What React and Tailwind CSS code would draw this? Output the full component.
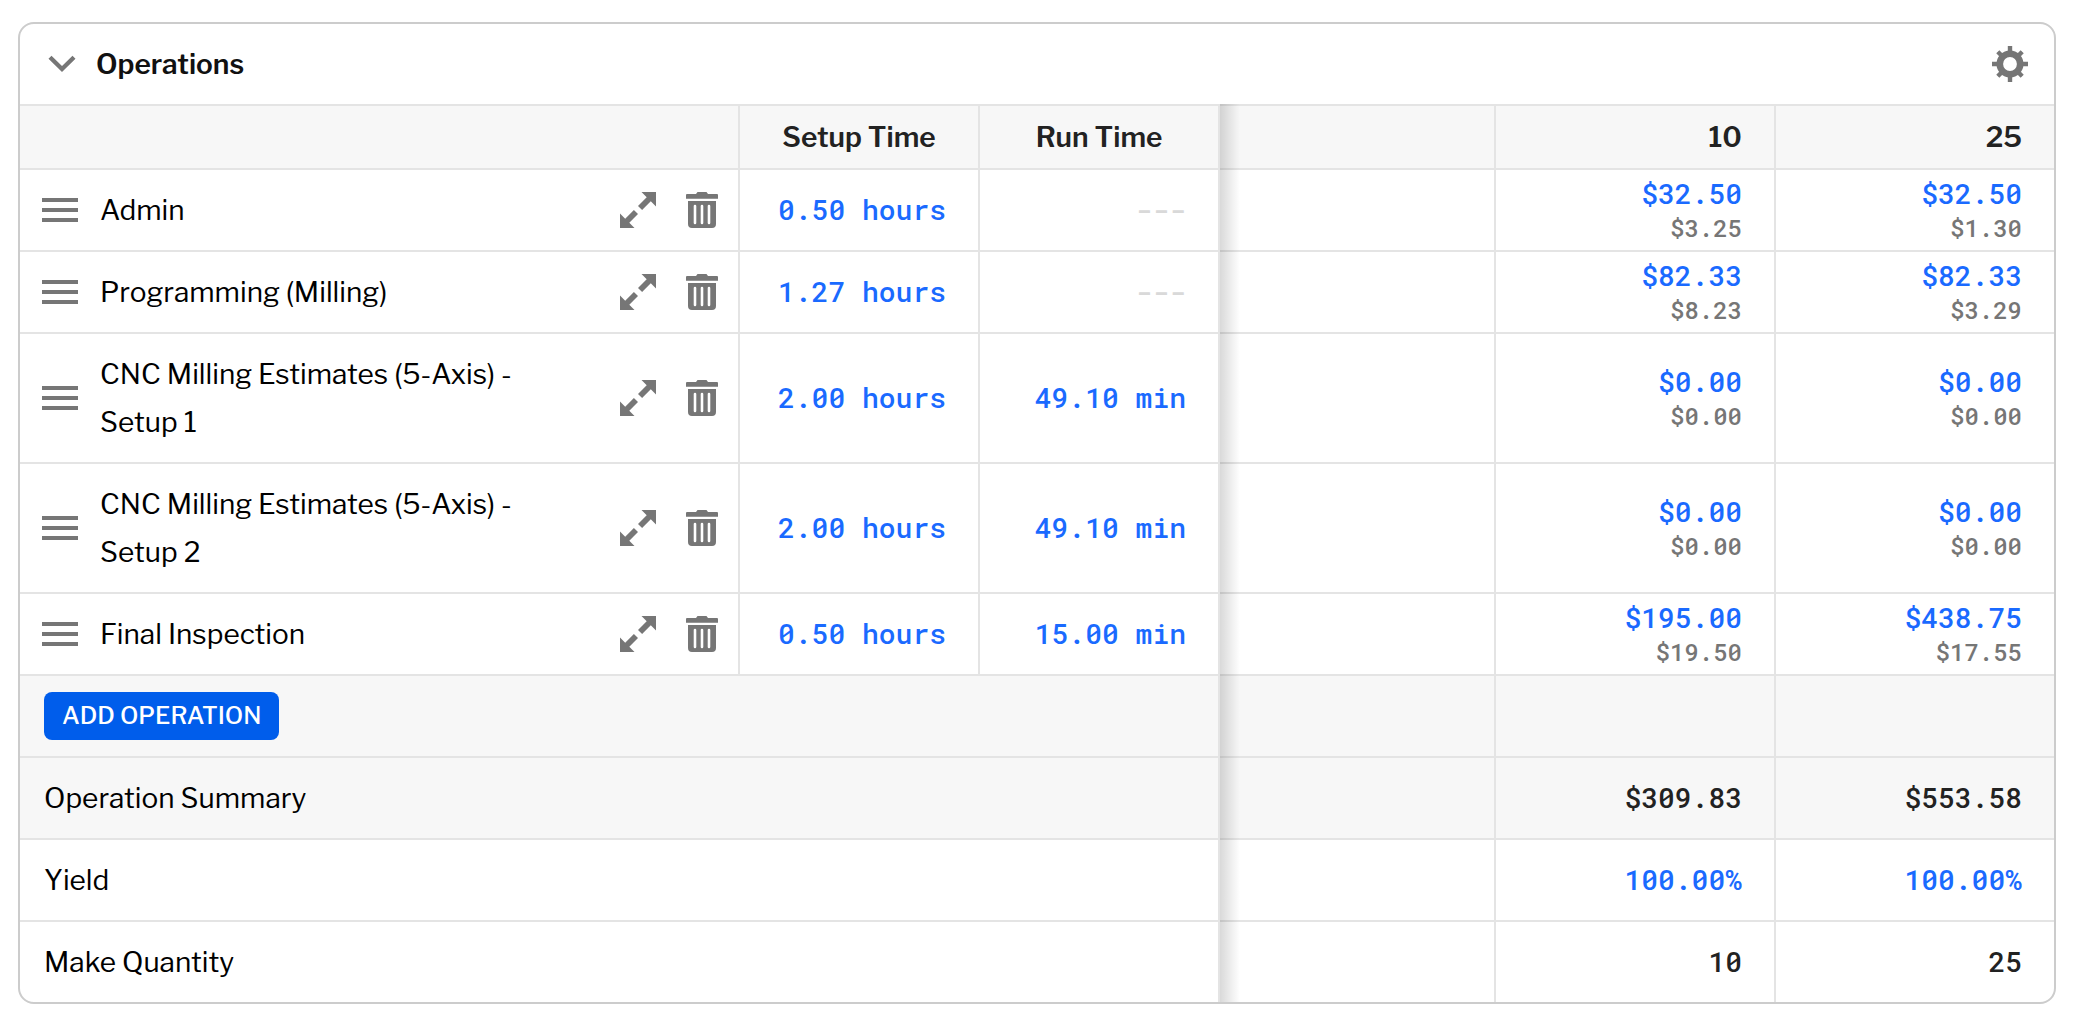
const operations = [
  { name: "Admin", setup: "0.50 hours", run: null, prices: [["$32.50", "$3.25"], ["$32.50", "$1.30"]] },
  { name: "Programming (Milling)", setup: "1.27 hours", run: null, prices: [["$82.33", "$8.23"], ["$82.33", "$3.29"]] },
  { name: "CNC Milling Estimates (5-Axis) - Setup 1", setup: "2.00 hours", run: "49.10 min", prices: [["$0.00", "$0.00"], ["$0.00", "$0.00"]] },
  { name: "CNC Milling Estimates (5-Axis) - Setup 2", setup: "2.00 hours", run: "49.10 min", prices: [["$0.00", "$0.00"], ["$0.00", "$0.00"]] },
  { name: "Final Inspection", setup: "0.50 hours", run: "15.00 min", prices: [["$195.00", "$19.50"], ["$438.75", "$17.55"]] },
];

const mono = "font-['Roboto_Mono','Noto_Sans_Mono','Liberation_Mono',monospace] font-medium";
const cell = "border-[#e4e4e4] border-b-2 border-r-2 p-0";
const lastCell = "border-[#e4e4e4] border-b-2 p-0";
const footCell = "border-[#e4e4e4] border-r-2 p-0";

function ChevronIcon() {
  return (
    <svg viewBox="0 0 36 36" className="block size-9" fill="none" stroke="currentColor" strokeWidth="4.3" aria-hidden="true">
      <path d="M6 11.2 18 23 30 11.2" />
    </svg>
  );
}

function GearIcon() {
  return (
    <svg viewBox="0 0 36 36" className="block size-9" aria-hidden="true">
      <g fill="none" stroke="currentColor">
        <circle cx="18" cy="18" r="10.2" strokeWidth="6.6" />
        <path
          strokeWidth="4.4"
          d="M18 0V6M18 30V36M0 18H6M30 18H36M5.8 5.8 9.5 9.5M26.5 26.5 30.2 30.2M30.2 5.8 26.5 9.5M9.5 26.5 5.8 30.2"
        />
      </g>
    </svg>
  );
}

function DragIcon() {
  return (
    <svg viewBox="0 0 36 24" className="block h-6 w-9" fill="currentColor" shapeRendering="crispEdges" aria-hidden="true">
      <path d="M0 0H36V4H0ZM0 10H36V14H0ZM0 20H36V24H0Z" />
    </svg>
  );
}

function ExpandIcon() {
  return (
    <svg viewBox="0 0 36 36" className="block size-9" fill="currentColor" aria-hidden="true">
      <path d="M21.500 0H36V14.500L30.800 9.300 22.100 18 18 13.900 26.700 5.200Z" />
      <path d="M14.500 36H0V21.500L5.200 26.700 13.900 18 18 22.100 9.300 30.800Z" />
    </svg>
  );
}

function TrashIcon() {
  return (
    <svg viewBox="0 0 36 36" className="block size-9" fill="currentColor" aria-hidden="true">
      <path d="M12 2 13.500 0H22.500L24 2H33Q34 2 34 3V6.700H2V3Q2 2 3 2Z" />
      <path
        fillRule="evenodd"
        d="M4 9H32V32Q32 36 28 36H8Q4 36 4 32ZM9.700 14V31Q9.700 32.200 11 32.200T12.300 31V14Q12.300 12.800 11 12.800T9.700 14ZM16.700 14V31Q16.700 32.200 18 32.200T19.300 31V14Q19.300 12.800 18 12.800T16.700 14ZM23.700 14V31Q23.700 32.200 25 32.200T26.300 31V14Q26.300 12.800 25 12.800T23.700 14Z"
      />
    </svg>
  );
}

function OperationRow({ op }) {
  return (
    <tr>
      <th scope="row" className={`${cell} font-normal`}>
        <div className="flex items-center py-4 pl-[22px] pr-[18px]">
          <button type="button" aria-label={`Reorder ${op.name}`} className="mr-[22px] text-[#767676]">
            <DragIcon />
          </button>
          <span className="mr-16 flex-1 text-left text-[28px] leading-[48px] text-black">{op.name}</span>
          <div className="flex gap-7 text-[#767676]">
            <button type="button" aria-label={`Expand ${op.name}`}><ExpandIcon /></button>
            <button type="button" aria-label={`Delete ${op.name}`}><TrashIcon /></button>
          </div>
        </div>
      </th>
      <td className={cell}>
        <div className={`${mono} pr-8 text-right text-[28px] text-[#1a6aff]`}>{op.setup}</div>
      </td>
      <td className={cell}>
        <div className={`${mono} pr-8 text-right text-[28px] ${op.run ? "text-[#1a6aff]" : "text-[#d9d9d9]"}`}>{op.run ?? "---"}</div>
      </td>
      <td className={cell} />
      {op.prices.map(([total, unit], i) => (
        <td key={i} className={i === 1 ? lastCell : cell}>
          <div className={`${mono} pr-8 text-right`}>
            <div className="text-[28px] leading-9 text-[#1a6aff]">{total}</div>
            <div className="text-[24px] leading-8 text-[#767676]">{unit}</div>
          </div>
        </td>
      ))}
    </tr>
  );
}

function SummaryRow({ label, values, shaded, blue, last }) {
  const c = last ? footCell : cell;
  const color = blue ? "text-[#1a6aff]" : "text-[#222]";
  return (
    <tr className={shaded ? "bg-[#f7f7f7]" : ""}>
      <th scope="row" colSpan={3} className={`${c} text-left font-normal`}>
        <div className="py-4 pl-6 text-[28px] leading-[48px] text-black">{label}</div>
      </th>
      <td className={c} />
      <td className={c}>
        <div className={`${mono} pr-8 text-right text-[28px] ${color}`}>{values[0]}</div>
      </td>
      <td className={last ? "p-0" : lastCell}>
        <div className={`${mono} pr-8 text-right text-[28px] ${color}`}>{values[1]}</div>
      </td>
    </tr>
  );
}

export default function App() {
  return (
    <main className="bg-white pt-[22px] pr-5 pb-5 pl-[18px] font-['Libre_Franklin',Inter,sans-serif]">
      <section className="overflow-hidden rounded-2xl border-2 border-[#ccc]">
        <header className="flex items-center py-[22px] pr-[26px] pl-6">
          <button type="button" aria-label="Collapse operations" className="mr-4 text-[#767676]">
            <ChevronIcon />
          </button>
          <h2 className="flex-1 text-[28px] leading-9 font-semibold text-[#111]">Operations</h2>
          <button type="button" aria-label="Operation settings" className="text-[#767676]">
            <GearIcon />
          </button>
        </header>
        <div className="relative">
          <table className="w-full table-fixed border-separate border-spacing-0">
            <colgroup>
              <col className="w-[720px]" />
              <col className="w-[240px]" />
              <col className="w-[240px]" />
              <col />
              <col className="w-[280px]" />
              <col className="w-[278px]" />
            </colgroup>
            <thead>
              <tr className="h-[66px] bg-[#f7f7f7] text-[28px] leading-9 text-[#222]">
                <td className={`${cell} border-t-2`} />
                <th scope="col" className={`${cell} border-t-2 text-center font-semibold`}>Setup Time</th>
                <th scope="col" className={`${cell} border-t-2 text-center font-semibold`}>Run Time</th>
                <td className={`${cell} border-t-2`} />
                <th scope="col" className={`${cell} border-t-2 text-right font-semibold`}><div className="pr-8">10</div></th>
                <th scope="col" className={`${lastCell} border-t-2 text-right font-semibold`}><div className="pr-8">25</div></th>
              </tr>
            </thead>
            <tbody>
              {operations.map((op) => (
                <OperationRow key={op.name} op={op} />
              ))}
              <tr className="bg-[#f7f7f7]">
                <td colSpan={3} className={cell}>
                  <div className="flex py-4 pl-6">
                    <button type="button" className="h-12 rounded-lg bg-[#005deb] px-[18px] text-[24px] font-medium text-white uppercase">
                      Add operation
                    </button>
                  </div>
                </td>
                <td className={cell} />
                <td className={cell} />
                <td className={lastCell} />
              </tr>
              <SummaryRow label="Operation Summary" values={["$309.83", "$553.58"]} shaded />
              <SummaryRow label="Yield" values={["100.00%", "100.00%"]} blue />
              <SummaryRow label="Make Quantity" values={["10", "25"]} last />
            </tbody>
          </table>
          <div className="pointer-events-none absolute inset-y-0 left-[1200px] w-5 bg-linear-to-r from-black/15 to-transparent" />
        </div>
      </section>
    </main>
  );
}
